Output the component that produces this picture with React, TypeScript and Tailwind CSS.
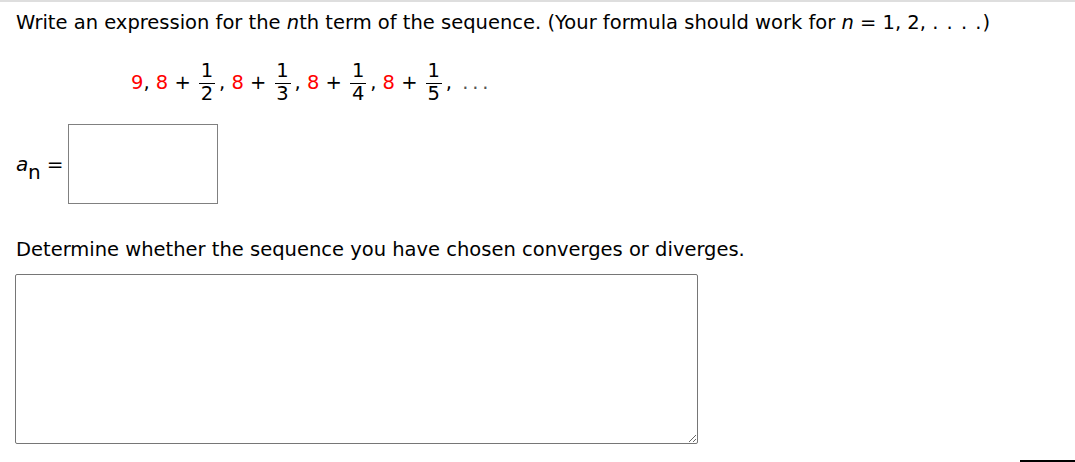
import React from "react";

function Frac({ d }: { d: string }) {
  return (
    <span className="inline-flex flex-col items-stretch w-[16px] ml-[2px] mr-[4px] leading-[19.5px]">
      <span className="text-center pb-[2px]">1</span>
      <span className="border-t border-black"></span>
      <span className="text-center">{d}</span>
    </span>
  );
}

export default function App() {
  const terms = ["2", "3", "4", "5"];
  return (
    <div
      className="w-[1075px] h-[462px] bg-white relative border-t-2 border-[#dedede] text-black text-[19.5px]"
      style={{ fontFamily: "'DejaVu Sans', Verdana, sans-serif" }}
    >
      <div className="pl-[16px] pt-[9px] leading-[23px] whitespace-nowrap">
        Write an expression for the <i>n</i>th term of the sequence. (Your formula should work for <i>n</i> = 1, 2, <span className="tracking-[1px]">. . . .</span>)
      </div>
      <div className="pl-[131px] mt-[23px] flex items-center h-[50px] leading-[23px] whitespace-pre">
        <span className="text-[#ff0000]">9</span>
        <span>{", "}</span>
        {terms.map((d) => (
          <React.Fragment key={d}>
            <span className="text-[#ff0000]">8</span>
            <span>{" + "}</span>
            <Frac d={d} />
            <span>{", "}</span>
          </React.Fragment>
        ))}
        <span className="text-[#555] flex ml-[4px]">
          <span className="w-[10px]">.</span>
          <span className="w-[10px]">.</span>
          <span className="w-[10px]">.</span>
        </span>
      </div>
      <div className="pl-[16px] mt-[17px] flex items-center">
        <span className="w-[52px] flex items-center text-[20px] leading-[23px]">
          <i className="w-[12px]">a</i>
          <span className="relative top-[8px]">n</span>
          <span className="ml-[6px]">=</span>
        </span>
        <div className="w-[150px] h-[80px] border border-[#808080]"></div>
      </div>
      <div className="pl-[16px] mt-[34px] leading-[23px] whitespace-nowrap">
        Determine whether the sequence you have chosen converges or diverges.
      </div>
      <div className="pl-[15px] mt-[13px]">
        <textarea className="block w-[683px] h-[170px] border border-[#767676] rounded-[2px] resize" />
      </div>
      <div className="absolute right-0 bottom-0 w-[55px] h-[2px] bg-black"></div>
    </div>
  );
}
